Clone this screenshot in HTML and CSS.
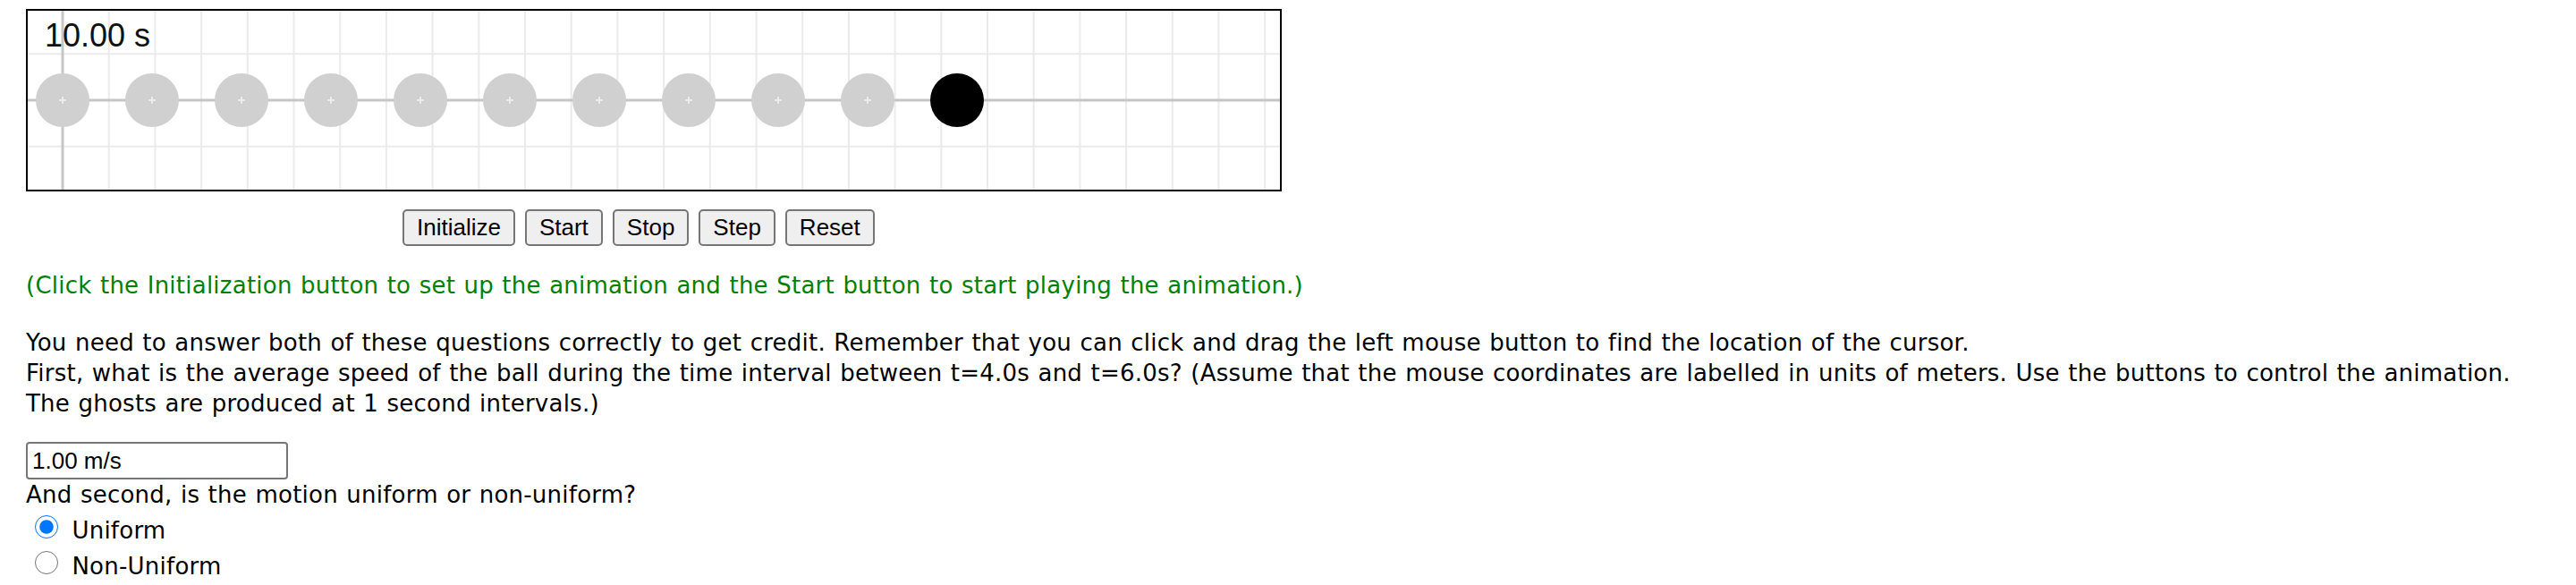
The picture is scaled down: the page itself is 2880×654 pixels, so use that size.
FILE: index.html
```html
<!DOCTYPE html>
<html lang="en">
<head>
<meta charset="utf-8">
<title>Ghost animation question</title>
<link rel="stylesheet" href="styles.css">
</head>
<body>
<main class="page">
  <div class="sim">
    <svg class="sim-canvas" width="1400" height="200" viewBox="0 0 1400 200" xmlns="http://www.w3.org/2000/svg">
      <g class="grid">
        <line x1="90.7" y1="0" x2="90.7" y2="200"/>
        <line x1="142.4" y1="0" x2="142.4" y2="200"/>
        <line x1="194.1" y1="0" x2="194.1" y2="200"/>
        <line x1="245.8" y1="0" x2="245.8" y2="200"/>
        <line x1="297.5" y1="0" x2="297.5" y2="200"/>
        <line x1="349.2" y1="0" x2="349.2" y2="200"/>
        <line x1="400.9" y1="0" x2="400.9" y2="200"/>
        <line x1="452.6" y1="0" x2="452.6" y2="200"/>
        <line x1="504.3" y1="0" x2="504.3" y2="200"/>
        <line x1="556" y1="0" x2="556" y2="200"/>
        <line x1="607.7" y1="0" x2="607.7" y2="200"/>
        <line x1="659.4" y1="0" x2="659.4" y2="200"/>
        <line x1="711.1" y1="0" x2="711.1" y2="200"/>
        <line x1="762.8" y1="0" x2="762.8" y2="200"/>
        <line x1="814.5" y1="0" x2="814.5" y2="200"/>
        <line x1="866.2" y1="0" x2="866.2" y2="200"/>
        <line x1="917.9" y1="0" x2="917.9" y2="200"/>
        <line x1="969.6" y1="0" x2="969.6" y2="200"/>
        <line x1="1021.3" y1="0" x2="1021.3" y2="200"/>
        <line x1="1073" y1="0" x2="1073" y2="200"/>
        <line x1="1124.7" y1="0" x2="1124.7" y2="200"/>
        <line x1="1176.4" y1="0" x2="1176.4" y2="200"/>
        <line x1="1228.1" y1="0" x2="1228.1" y2="200"/>
        <line x1="1279.8" y1="0" x2="1279.8" y2="200"/>
        <line x1="1331.5" y1="0" x2="1331.5" y2="200"/>
        <line x1="1383.2" y1="0" x2="1383.2" y2="200"/>
        <line x1="0" y1="48.3" x2="1400" y2="48.3"/>
        <line x1="0" y1="151.7" x2="1400" y2="151.7"/>
      </g>
      <g class="axes">
        <line x1="39" y1="0" x2="39" y2="200"/>
        <line x1="0" y1="100" x2="1400" y2="100"/>
      </g>
      <text class="clock" x="19" y="40">10.00 s</text>
      <g class="ghosts">
        <circle cx="39" cy="100" r="30"/>
        <circle cx="139" cy="100" r="30"/>
        <circle cx="239" cy="100" r="30"/>
        <circle cx="339" cy="100" r="30"/>
        <circle cx="439" cy="100" r="30"/>
        <circle cx="539" cy="100" r="30"/>
        <circle cx="639" cy="100" r="30"/>
        <circle cx="739" cy="100" r="30"/>
        <circle cx="839" cy="100" r="30"/>
        <circle cx="939" cy="100" r="30"/>
      </g>
      <path class="marks" d="M35 100h8M39 96v8M135 100h8M139 96v8M235 100h8M239 96v8M335 100h8M339 96v8M435 100h8M439 96v8M535 100h8M539 96v8M635 100h8M639 96v8M735 100h8M739 96v8M835 100h8M839 96v8M935 100h8M939 96v8"/>
      <circle class="ball" cx="1039" cy="100" r="30"/>
    </svg>
  </div>

  <div class="controls">
    <button type="button" class="btn">Initialize</button>
    <button type="button" class="btn">Start</button>
    <button type="button" class="btn">Stop</button>
    <button type="button" class="btn">Step</button>
    <button type="button" class="btn">Reset</button>
  </div>

  <p class="hint">(Click the Initialization button to set up the animation and the Start button to start playing the animation.)</p>

  <p class="question">You need to answer both of these questions correctly to get credit. Remember that you can click and drag the left mouse button to find the location of the cursor.<br>First, what is the average speed of the ball during the time interval between t=4.0s and t=6.0s? (Assume that the mouse coordinates are labelled in units of meters. Use the buttons to control the animation.<br>The ghosts are produced at 1 second intervals.)</p>

  <div class="answer"><input class="answer-input" type="text" value="1.00 m/s"></div>
  <div class="prompt">And second, is the motion uniform or non-uniform?</div>
  <label class="choice"><input class="radio" type="radio" name="motion" checked> Uniform</label>
  <label class="choice"><input class="radio" type="radio" name="motion"> Non-Uniform</label>
</main>
</body>
</html>
```

FILE: styles.css
```css
html, body {
  margin: 0;
  padding: 0;
  background: #fff;
}

body {
  font-family: "DejaVu Sans", Verdana, sans-serif;
  font-size: 26px;
  line-height: 34px;
  letter-spacing: 0.24px;
  word-spacing: 0.9px;
  color: #000;
}

.page {
  padding: 10px 29px 0 29px;
}

.sim {
  width: 1400px;
  height: 200px;
  border: 2px solid #000;
}

.sim-canvas {
  display: block;
}

.grid line {
  stroke: #ebebeb;
  stroke-width: 2;
}

.axes line {
  stroke: #c6c6c6;
  stroke-width: 3;
}

.clock {
  font-family: "Liberation Sans", Arial, sans-serif;
  font-size: 36px;
  letter-spacing: 0;
  word-spacing: 0;
  fill: #111;
}

.ghosts circle {
  fill: #d0d0d0;
}

.marks {
  stroke: #ececec;
  stroke-width: 2;
  fill: none;
}

.ball {
  fill: #000;
}

.controls {
  display: flex;
  gap: 11px;
  margin-top: 20px;
  padding-left: 421px;
}

.btn {
  font-family: "Liberation Sans", Arial, sans-serif;
  font-size: 26px;
  letter-spacing: 0;
  height: 41px;
  padding: 0 14px;
  margin: 0;
  color: #000;
  background: #efefef;
  border: 2px solid #767676;
  border-radius: 5px;
}

.hint {
  color: #008000;
  margin: 27px 0 0 0;
}

.question {
  margin: 30px 0 0 0;
}

.answer {
  margin-top: 26px;
  height: 42px;
}

.answer-input {
  box-sizing: border-box;
  width: 293px;
  height: 42px;
  margin: 0;
  padding: 2px 5px;
  font-family: "Liberation Sans", Arial, sans-serif;
  font-size: 26px;
  letter-spacing: 0;
  color: #000;
  border: 2px solid #767676;
  border-radius: 4px;
  background: #fff;
}

.prompt {
  margin: 0;
}

.choice {
  display: block;
}

.radio {
  width: 26px;
  height: 26px;
  margin: 6px 6px 0 10px;
  accent-color: #0075ff;
}
```
